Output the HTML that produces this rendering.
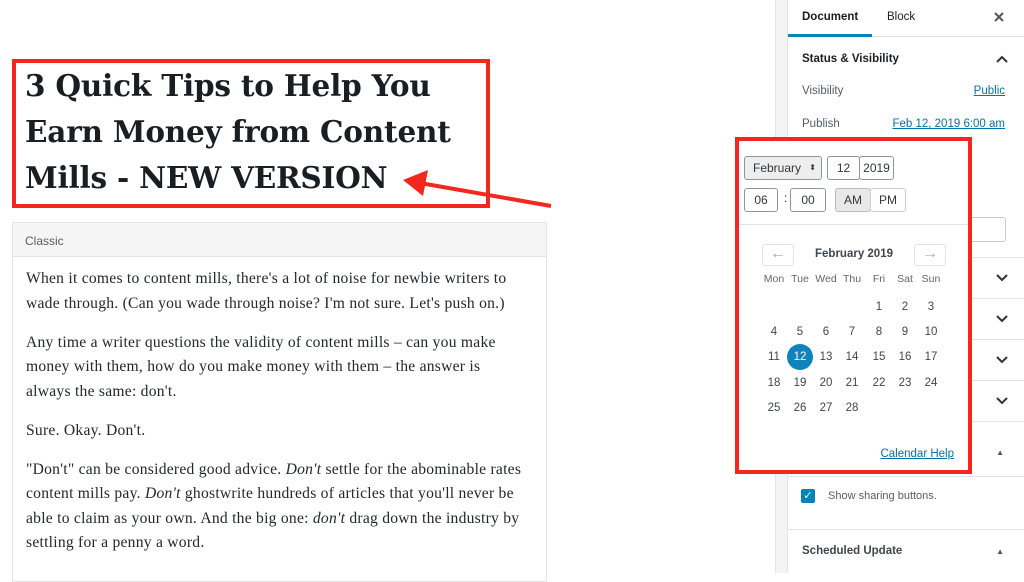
<!DOCTYPE html>
<html><head><style>
*{margin:0;padding:0;box-sizing:border-box}
body{width:1024px;height:573px;overflow:hidden;background:#fff;font-family:"Liberation Sans",sans-serif;position:relative;color:#191e23}
.abs{position:absolute}
.title{left:25px;top:63px;font-family:"DejaVu Serif",serif;font-weight:bold;font-size:29.5px;line-height:46px;color:#191e23;width:462px;letter-spacing:-0.2px}
.classic{left:12px;top:222px;width:535px;height:360px;border:1px solid #e2e4e7}
.classic .hd{height:34px;background:#f5f5f5;border-bottom:1px solid #e2e4e7;font-size:12px;color:#555d66;padding:11px 12px}
.classic .bd{padding:10px 18px 10px 13px;font-family:"Liberation Serif",serif;font-size:15.6px;line-height:24.5px;color:#23282d;letter-spacing:0.25px}
.classic p{margin-bottom:14.5px}
.side{left:787px;top:0;width:237px;height:573px;background:#fff;border-left:1px solid #e2e4e7}
.strip{left:775px;top:0;width:12px;height:573px;background:#f3f4f5;border-left:1px solid #e2e4e7}
.sec{position:absolute;left:0;width:237px;border-top:1px solid #e2e4e7}
.chev{position:absolute;right:16px}
.cal{left:735px;top:137px;width:237px;height:337px;background:#fff;border:4px solid #f2271d}
.inp{position:absolute;border:1px solid #8d96a0;border-radius:3px;background:#fff;font-size:12px;color:#32373c;text-align:center;height:24px;line-height:22px}
.d{position:absolute;width:26px;text-align:center;font-size:11.5px;color:#40464d}
a{color:#0073aa;text-decoration:underline}
</style></head><body>
<div class="abs title">3 Quick Tips to Help You Earn Money from Content Mills - NEW VERSION</div>
<div class="abs" style="left:12px;top:59px;width:478px;height:149px;border:4px solid #f2271d"></div>
<svg class="abs" style="left:0;top:0" width="1024" height="573"><line x1="551" y1="206" x2="420" y2="183" stroke="#f2271d" stroke-width="4"/><polygon points="403,180 428,170 423,196" fill="#f2271d"/></svg>
<div class="abs classic"><div class="hd">Classic</div><div class="bd">
<p>When it comes to content mills, there's a lot of noise for newbie writers to wade through. (Can you wade through noise? I'm not sure. Let's push on.)</p>
<p>Any time a writer questions the validity of content mills – can you make money with them, how do you make money with them – the answer is<br>always the same: don't.</p>
<p>Sure. Okay. Don't.</p>
<p>"Don't" can be considered good advice. <i>Don't</i> settle for the abominable rates content mills pay. <i>Don't</i> ghostwrite hundreds of articles that you'll never be able to claim as your own. And the big one: <i>don't</i> drag down the industry by settling for a penny a word.</p>
</div></div>
<div class="abs strip"></div>
<div class="abs side">
<div style="position:absolute;top:0;left:0;width:237px;height:37px;background:#fff;border-bottom:1px solid #e2e4e7"></div>
<div style="position:absolute;top:11px;left:14px;font-size:11.5px;font-weight:bold">Document</div>
<div style="position:absolute;top:11px;left:99px;font-size:11.5px">Block</div>
<svg style="position:absolute;top:12px;right:20px" width="10" height="10"><path d="M1 1L9 9M9 1L1 9" stroke="#555" stroke-width="2"/></svg>
<div style="position:absolute;top:34px;left:0;width:84px;height:3px;background:#0085ba"></div>
<div style="position:absolute;top:53px;left:14px;font-size:11.5px;font-weight:bold">Status &amp; Visibility</div>
<svg class="chev" style="top:55px" width="12" height="8"><path d="M1 7L6 2L11 7" fill="none" stroke="#333" stroke-width="2"/></svg>
<div style="position:absolute;top:85px;left:14px;font-size:11.5px;color:#555d66">Visibility</div>
<div style="position:absolute;top:85px;right:19px;font-size:11.5px"><a>Public</a></div>
<div style="position:absolute;top:118px;left:14px;font-size:11.5px;color:#555d66">Publish</div>
<div style="position:absolute;top:118px;right:19px;font-size:11.5px"><a>Feb 12, 2019 6:00 am</a></div>
<div style="position:absolute;top:217px;left:150px;width:68px;height:25px;border:1px solid #ccc;border-radius:3px"></div>
<div class="sec" style="top:257px"></div><svg class="chev" style="top:274px" width="12" height="8"><path d="M1 1L6 6L11 1" fill="none" stroke="#333" stroke-width="2"/></svg>
<div class="sec" style="top:298px"></div><svg class="chev" style="top:315px" width="12" height="8"><path d="M1 1L6 6L11 1" fill="none" stroke="#333" stroke-width="2"/></svg>
<div class="sec" style="top:339px"></div><svg class="chev" style="top:356px" width="12" height="8"><path d="M1 1L6 6L11 1" fill="none" stroke="#333" stroke-width="2"/></svg>
<div class="sec" style="top:380px"></div><svg class="chev" style="top:397px" width="12" height="8"><path d="M1 1L6 6L11 1" fill="none" stroke="#333" stroke-width="2"/></svg>
<div class="sec" style="top:421px"></div><div style="position:absolute;right:20px;top:448px;font-size:8px;color:#555">▲</div>
<div class="sec" style="top:476px"></div>
<div style="position:absolute;top:489px;left:13px;width:14px;height:14px;background:#0085ba;border-radius:2px;color:#fff;font-size:11px;line-height:14px;text-align:center">✓</div>
<div style="position:absolute;top:490px;left:40px;font-size:11px;color:#555d66">Show sharing buttons.</div>
<div class="sec" style="top:529px"></div>
<div style="position:absolute;top:545px;left:14px;font-size:11.5px;font-weight:bold;color:#40464d">Scheduled Update</div>
<div style="position:absolute;right:20px;top:547px;font-size:8px;color:#555">▲</div>
</div>
<div class="abs cal">
<div class="inp" style="left:5px;top:15px;width:78px;background:#eee;text-align:left;padding-left:8px">February <span style="float:right;margin-right:5px;font-size:8px">⬍</span></div>
<div class="inp" style="left:88px;top:15px;width:33px">12</div>
<div class="inp" style="left:120px;top:15px;width:35px">2019</div>
<div class="inp" style="left:5px;top:47px;width:34px">06</div>
<div style="position:absolute;left:45px;top:50px;font-size:12px">:</div>
<div class="inp" style="left:51px;top:47px;width:36px">00</div>
<div class="inp" style="left:96px;top:47px;width:36px;background:#e8e8e8;border-color:#bbb">AM</div>
<div class="inp" style="left:131px;top:47px;width:36px;border-color:#ccc">PM</div>
<div style="position:absolute;left:0;top:83px;width:229px;border-top:1px solid #e2e4e7"></div>
<div style="position:absolute;left:23px;top:103px;width:32px;height:22px;border:1px solid #e2e4e7;border-radius:3px;text-align:center;color:#aaa;font-size:16px;line-height:18px">←</div>
<div style="position:absolute;left:175px;top:103px;width:32px;height:22px;border:1px solid #e2e4e7;border-radius:3px;text-align:center;color:#aaa;font-size:16px;line-height:18px">→</div>
<div style="position:absolute;left:60px;top:107px;width:110px;text-align:center;font-size:11.5px;font-weight:bold;color:#40464d">February 2019</div>
<div class="d" style="left:22px;top:132px;color:#666;font-size:10.5px">Mon</div><div class="d" style="left:48px;top:132px;color:#666;font-size:10.5px">Tue</div><div class="d" style="left:74px;top:132px;color:#666;font-size:10.5px">Wed</div><div class="d" style="left:100px;top:132px;color:#666;font-size:10.5px">Thu</div><div class="d" style="left:127px;top:132px;color:#666;font-size:10.5px">Fri</div><div class="d" style="left:153px;top:132px;color:#666;font-size:10.5px">Sat</div><div class="d" style="left:179px;top:132px;color:#666;font-size:10.5px">Sun</div>
<div class="d" style="left:127px;top:160px">1</div><div class="d" style="left:153px;top:160px">2</div><div class="d" style="left:179px;top:160px">3</div>
<div class="d" style="left:22px;top:185px">4</div><div class="d" style="left:48px;top:185px">5</div><div class="d" style="left:74px;top:185px">6</div><div class="d" style="left:100px;top:185px">7</div><div class="d" style="left:127px;top:185px">8</div><div class="d" style="left:153px;top:185px">9</div><div class="d" style="left:179px;top:185px">10</div>
<div class="d" style="left:22px;top:210px">11</div><div style="position:absolute;left:48px;top:203px;width:26px;height:26px;border-radius:50%;background:#0f83bd;color:#fff;font-size:11.5px;text-align:center;line-height:26px">12</div><div class="d" style="left:74px;top:210px">13</div><div class="d" style="left:100px;top:210px">14</div><div class="d" style="left:127px;top:210px">15</div><div class="d" style="left:153px;top:210px">16</div><div class="d" style="left:179px;top:210px">17</div>
<div class="d" style="left:22px;top:236px">18</div><div class="d" style="left:48px;top:236px">19</div><div class="d" style="left:74px;top:236px">20</div><div class="d" style="left:100px;top:236px">21</div><div class="d" style="left:127px;top:236px">22</div><div class="d" style="left:153px;top:236px">23</div><div class="d" style="left:179px;top:236px">24</div>
<div class="d" style="left:22px;top:261px">25</div><div class="d" style="left:48px;top:261px">26</div><div class="d" style="left:74px;top:261px">27</div><div class="d" style="left:100px;top:261px">28</div>
<div style="position:absolute;right:14px;top:307px;font-size:11.5px"><a>Calendar Help</a></div>
</div>
</body></html>
